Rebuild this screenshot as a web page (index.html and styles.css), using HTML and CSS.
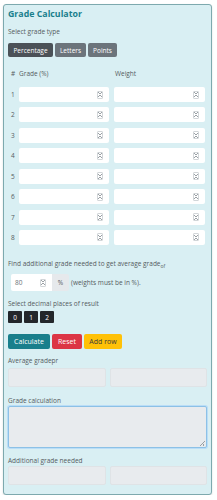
FILE: index.html
```html
<!DOCTYPE html>
<html lang="en">
<head>
    <meta charset="UTF-8">
    <title>Grade Calculator</title>
    <link rel="stylesheet" href="styles.css">
</head>
<body>
    <div class="card">
        <div class="title">Grade Calculator</div>
        <div class="label first">Select grade type</div>
        <div class="type-btns">
            <span class="btn dark">Percentage</span>
            <span class="btn gray">Letters</span>
            <span class="btn gray">Points</span>
        </div>

        <div class="grades">
            <div class="head">#</div>
            <div class="head">Grade (%)</div>
            <div class="head weight">Weight</div>

            <div class="num">1</div>
            <div class="field"><span class="spin"></span></div>
            <div class="field"><span class="spin"></span></div>
            <div class="num">2</div>
            <div class="field"><span class="spin"></span></div>
            <div class="field"><span class="spin"></span></div>
            <div class="num">3</div>
            <div class="field"><span class="spin"></span></div>
            <div class="field"><span class="spin"></span></div>
            <div class="num">4</div>
            <div class="field"><span class="spin"></span></div>
            <div class="field"><span class="spin"></span></div>
            <div class="num">5</div>
            <div class="field"><span class="spin"></span></div>
            <div class="field"><span class="spin"></span></div>
            <div class="num">6</div>
            <div class="field"><span class="spin"></span></div>
            <div class="field"><span class="spin"></span></div>
            <div class="num">7</div>
            <div class="field"><span class="spin"></span></div>
            <div class="field"><span class="spin"></span></div>
            <div class="num">8</div>
            <div class="field"><span class="spin"></span></div>
            <div class="field"><span class="spin"></span></div>
        </div>

        <div class="label find">Find additional grade needed to get average grade<sub>of</sub></div>
        <div class="target">
            <div class="target-input">80<span class="spin"></span></div>
            <div class="addon">%</div>
            <div class="note">(weights must be in %).</div>
        </div>

        <div class="label decimals-label">Select decimal places of result</div>
        <div class="decimals">
            <span class="dec">0</span>
            <span class="dec">1</span>
            <span class="dec">2</span>
        </div>

        <div class="actions">
            <span class="btn calc">Calculate</span>
            <span class="btn reset">Reset</span>
            <span class="btn add">Add row</span>
        </div>

        <div class="label avg-label">Average gradepr</div>
        <div class="pair">
            <div class="out"></div>
            <div class="out"></div>
        </div>

        <div class="label calc-label">Grade calculation</div>
        <div class="textarea"><span class="grip"></span></div>

        <div class="label extra-label">Additional grade needed</div>
        <div class="pair last">
            <div class="out"></div>
            <div class="out"></div>
        </div>
    </div>
</body>
</html>
```

FILE: styles.css
```css
body {
    font-family: "Open Sans", "Liberation Sans", sans-serif;
    margin: 0;
    padding: 0;
    background-color: #fff;
    color: #555b60;
}

.card {
    margin: 4px 0 0 3px;
    width: 209px;
    height: 491px;
    box-sizing: border-box;
    padding: 2px 4px 10px 4px;
    background-color: #d9eff3;
    border: 1px solid #7da9ae;
    border-radius: 3px;
    box-shadow: 0 1px 2px rgba(0, 0, 0, 0.15);
}

.title {
    font-size: 8.8px;
    font-weight: bold;
    line-height: 14px;
    color: #1a7f8d;
}

.label {
    font-size: 6.5px;
    line-height: 10px;
    white-space: nowrap;
}

.label.first {
    margin-top: 6px;
}

.btn {
    display: inline-flex;
    align-items: center;
    justify-content: center;
    box-sizing: border-box;
    border-radius: 2px;
    color: #fff;
    font-size: 6.5px;
}

.type-btns {
    display: flex;
    gap: 2px;
    margin-top: 6px;
}

.type-btns .btn {
    height: 14px;
}

.dark {
    width: 45px;
    background-color: #4b5157;
}

.gray {
    background-color: #6c747b;
    padding: 0 4px;
}

.type-btns .gray:nth-child(2) {
    width: 31px;
}

.type-btns .gray:nth-child(3) {
    width: 29px;
}

.grades {
    display: grid;
    grid-template-columns: 6px 90px 91px;
    column-gap: 5px;
    row-gap: 5.43px;
    margin-top: 12px;
}

.head {
    font-size: 6.5px;
    line-height: 10px;
    margin-bottom: 2.6px;
}

.head:first-child {
    padding-left: 3px;
}

.head.weight {
    padding-left: 1px;
}

.num {
    font-size: 6.5px;
    padding-left: 3px;
    display: flex;
    align-items: center;
}

.field {
    height: 15px;
    background-color: #fff;
    border-radius: 2px;
    display: flex;
    align-items: center;
    justify-content: flex-end;
    padding-right: 6px;
}

.spin {
    width: 4px;
    height: 6px;
    border: 0.5px solid #d2d6d9;
    border-radius: 1px;
    background:
        linear-gradient(to top right, transparent 48%, #9aa0a5 50%, transparent 56%) 0 0.5px / 2px 2px no-repeat,
        linear-gradient(to top left, transparent 48%, #9aa0a5 50%, transparent 56%) 2px 0.5px / 2px 2px no-repeat,
        linear-gradient(to bottom right, transparent 48%, #9aa0a5 50%, transparent 56%) 0 3.5px / 2px 2px no-repeat,
        linear-gradient(to bottom left, transparent 48%, #9aa0a5 50%, transparent 56%) 2px 3.5px / 2px 2px no-repeat;
}

.find {
    margin-top: 14px;
}

.find sub {
    font-size: 5px;
}

.target {
    display: flex;
    align-items: center;
    margin: 3px 0 0 3px;
    height: 17px;
}

.target-input {
    width: 41px;
    height: 17px;
    box-sizing: border-box;
    background-color: #fff;
    border-radius: 2px 0 0 2px;
    font-size: 6.5px;
    color: #6c7378;
    display: flex;
    align-items: center;
    justify-content: space-between;
    padding: 0 6px 0 4px;
}

.addon {
    width: 17px;
    height: 17px;
    background-color: #e6e9ec;
    border-radius: 0 2px 2px 0;
    font-size: 6.5px;
    display: flex;
    align-items: center;
    justify-content: center;
}

.note {
    font-size: 6.5px;
    margin-left: 2px;
}

.decimals-label {
    margin-top: 8px;
}

.decimals {
    display: flex;
    gap: 2px;
    margin-top: 2px;
}

.dec {
    width: 14px;
    height: 12px;
    background-color: #23272b;
    color: #fff;
    font-size: 6.5px;
    border-radius: 1px;
    display: flex;
    align-items: center;
    justify-content: center;
}

.actions {
    display: flex;
    gap: 2px;
    margin-top: 11px;
}

.actions .btn {
    height: 15px;
    font-size: 7px;
}

.calc {
    width: 42px;
    background-color: #197f8c;
}

.reset {
    width: 30px;
    background-color: #dc3545;
}

.add {
    width: 38px;
    background-color: #ffc107;
    color: #3a3a3a;
}

.avg-label {
    margin-top: 7px;
}

.pair {
    display: flex;
    gap: 4px;
    margin-top: 2px;
}

.pair.last {
    margin-top: 0;
}

.out {
    flex: 1;
    height: 19px;
    box-sizing: border-box;
    background-color: #e8ebee;
    border: 1px solid #dfe3e6;
    border-radius: 2px;
}

.calc-label {
    margin-top: 8.5px;
}

.textarea {
    height: 42px;
    margin-top: 0.5px;
    box-sizing: border-box;
    background-color: #e8ebee;
    border: 1px solid #8cc1e6;
    border-radius: 2px;
    box-shadow: 0 0 0 1px rgba(128, 189, 255, 0.35);
    display: flex;
    align-items: flex-end;
    justify-content: flex-end;
    padding: 0 1px 1px 0;
}

.grip {
    width: 5px;
    height: 5px;
    background: linear-gradient(135deg, transparent 45%, #9aa0a5 45%, #9aa0a5 55%, transparent 55%, transparent 70%, #9aa0a5 70%, #9aa0a5 80%, transparent 80%);
}

.extra-label {
    margin-top: 8px;
}
```
